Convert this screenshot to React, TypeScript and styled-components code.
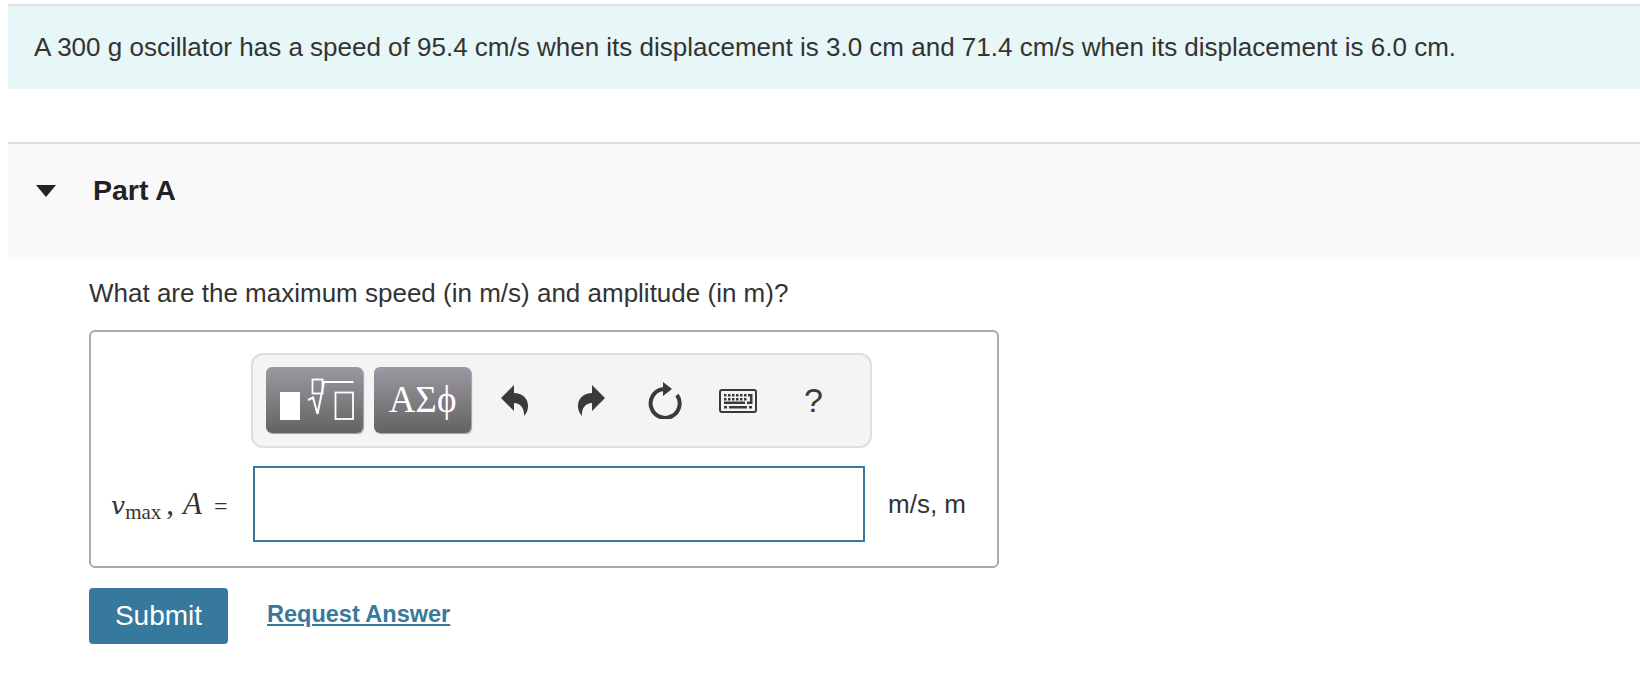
import styled, { createGlobalStyle } from "styled-components";

const GlobalStyle = createGlobalStyle`
  html, body {
    margin: 0;
    padding: 0;
    background: #ffffff;
  }
  body {
    padding-left: 8px;
    font-family: "Liberation Sans", Arial, sans-serif;
    color: #333333;
  }
`;

const KEY_ROWS = [
  [5, 9, 13, 17, 21, 25, 29],
  [5, 9, 13, 17, 21, 25],
];

const UndoIcon = ({ flip }: { flip?: boolean }) => (
  <ToolIcon $flip={flip} width="27" height="31" viewBox="0 0 27 31">
    <path d="M0 13 L13 0 L13 8 C22 8 27.5 14 27 22 C26.8 26 25 29 23 31 C23.6 24 20 18 13 18 L13 26 Z" fill="#3a3a3a" />
  </ToolIcon>
);

const ResetIcon = () => (
  <svg width="34" height="37" viewBox="0 0 34 37">
    <path d="M29 13 A14.5 14.5 0 1 1 15 7" fill="none" stroke="#3a3a3a" strokeWidth="4" />
    <path d="M15 0 L24 7 L15 14 Z" fill="#3a3a3a" />
  </svg>
);

const KeyboardIcon = () => (
  <svg width="38" height="24" viewBox="0 0 38 24">
    <rect x="1" y="1" width="36" height="22" rx="2" fill="#f4f4f4" stroke="#3a3a3a" strokeWidth="2" />
    {KEY_ROWS.map((row, r) =>
      row.map((x) => <rect key={`${r}-${x}`} x={x} y={5 + r * 4} width="2.5" height="2.5" fill="#3a3a3a" />)
    )}
    <rect x="31" y="5" width="2.5" height="10" fill="#3a3a3a" />
    <rect x="5" y="12.5" width="21" height="2.5" fill="#3a3a3a" />
    <rect x="28" y="12.5" width="5" height="2.5" fill="#3a3a3a" />
    <rect x="5" y="17" width="3" height="2.5" fill="#3a3a3a" />
    <rect x="10" y="17" width="18" height="2.5" fill="#3a3a3a" />
    <rect x="30" y="17" width="3" height="2.5" fill="#3a3a3a" />
  </svg>
);

const TemplatesGlyph = () => (
  <svg width="97" height="66" viewBox="0 0 97 66">
    <rect x="14" y="25" width="20" height="28" fill="#ffffff" />
    <rect x="46.5" y="12.5" width="10" height="14" fill="none" stroke="#ffffff" strokeWidth="1.8" />
    <path d="M42 33 L47 30.5 L51.5 47 L58 15 L87.5 15" fill="none" stroke="#ffffff" strokeWidth="2" />
    <rect x="69.5" y="25.5" width="17.5" height="26.5" fill="none" stroke="#ffffff" strokeWidth="1.8" />
  </svg>
);

export default function App() {
  return (
    <Page>
      <GlobalStyle />
      <Banner>A 300 g oscillator has a speed of 95.4 cm/s when its displacement is 3.0 cm and 71.4 cm/s when its displacement is 6.0 cm.</Banner>

      <PartHeader>
        <Caret />
        <PartTitle>Part A</PartTitle>
      </PartHeader>

      <PartBody>
        <Question>What are the maximum speed (in m/s) and amplitude (in m)?</Question>

        <AnswerBox>
          <Toolbar>
            <MathButton>
              <TemplatesGlyph />
            </MathButton>
            <MathButton $gap>ΑΣϕ</MathButton>
            <IconSlot $left={30} $width={27}>
              <UndoIcon />
            </IconSlot>
            <IconSlot $left={50} $width={27}>
              <UndoIcon flip />
            </IconSlot>
            <IconSlot $left={43} $width={34}>
              <ResetIcon />
            </IconSlot>
            <IconSlot $left={37} $width={38}>
              <KeyboardIcon />
            </IconSlot>
            <HelpMark>?</HelpMark>
          </Toolbar>

          <AnswerRow>
            <MathLabel>
              <MathV>v</MathV>
              <sub>max</sub>
              <Comma>,</Comma>
              <MathItalic>A</MathItalic>
              <Equals>=</Equals>
            </MathLabel>
            <AnswerInput type="text" />
            <Units>m/s, m</Units>
          </AnswerRow>
        </AnswerBox>

        <Actions>
          <SubmitButton>Submit</SubmitButton>
          <RequestLink href="#">Request Answer</RequestLink>
        </Actions>
      </PartBody>
    </Page>
  );
}

const Page = styled.div`
  padding-top: 4px;
  height: 676px;
  overflow: hidden;
`;

const Banner = styled.div`
  box-sizing: border-box;
  height: 85px;
  border-top: 2px solid #e0e0e0;
  background: #e7f6f6;
  padding-left: 26px;
  display: flex;
  align-items: center;
  font-size: 26px;
  padding-bottom: 1px;
`;

const PartHeader = styled.div`
  box-sizing: border-box;
  height: 115px;
  margin-top: 53px;
  border-top: 2px solid #e0e0e0;
  background: #f9f9f9;
  display: flex;
  align-items: center;
  padding-left: 28px;
  padding-bottom: 20px;
`;

const Caret = styled.span`
  width: 0;
  height: 0;
  border-left: 10.5px solid transparent;
  border-right: 10.5px solid transparent;
  border-top: 12px solid #222222;
`;

const PartTitle = styled.h2`
  margin: 0 0 0 37px;
  font-size: 28.5px;
  font-weight: 700;
  color: #222222;
`;

const PartBody = styled.div`
  padding-left: 81px;
`;

const Question = styled.p`
  margin: 0;
  padding-top: 22px;
  height: 51px;
  line-height: 28px;
  font-size: 26px;
`;

const AnswerBox = styled.div`
  box-sizing: border-box;
  width: 910px;
  height: 238px;
  border: 2px solid #aaaaaa;
  border-radius: 6px;
  padding-top: 21px;
`;

const Toolbar = styled.div`
  box-sizing: border-box;
  width: 621px;
  height: 95px;
  margin-left: 160px;
  border: 2px solid #dedede;
  border-radius: 12px;
  background: #f4f4f4;
  display: flex;
  align-items: center;
  padding-left: 13px;
`;

const MathButton = styled.div<{ $gap?: boolean }>`
  width: 97px;
  height: 66px;
  margin-left: ${(p) => (p.$gap ? 11 : 0)}px;
  margin-bottom: 2px;
  border-radius: 6px;
  background: linear-gradient(#9b99a1, #636363);
  box-shadow: 1px 1px 1px rgba(0, 0, 0, 0.35);
  color: #ffffff;
  display: flex;
  align-items: center;
  justify-content: center;
  font-family: "Liberation Serif", serif;
  font-size: 37px;
`;

const ToolIcon = styled.svg<{ $flip?: boolean }>`
  transform: ${(p) => (p.$flip ? "scaleX(-1)" : "none")};
`;

const IconSlot = styled.div<{ $left: number; $width: number }>`
  flex: none;
  width: ${(p) => p.$width}px;
  margin-left: ${(p) => p.$left}px;
  display: flex;
  align-items: center;
  justify-content: center;
`;

const HelpMark = styled.span`
  margin-left: 47px;
  font-size: 34px;
  color: #3a3a3a;
`;

const AnswerRow = styled.div`
  display: flex;
  align-items: center;
  margin-top: 18px;
`;

const MathLabel = styled.div`
  box-sizing: border-box;
  width: 162px;
  padding-left: 20px;
  display: flex;
  align-items: baseline;
  font-family: "Liberation Serif", serif;
  font-size: 31px;
  color: #333333;

  sub {
    font-size: 21px;
    vertical-align: baseline;
    position: relative;
    top: 5px;
  }
`;

const MathItalic = styled.i`
  font-style: italic;
`;

const MathV = styled.i`
  font-family: "DejaVu Serif", serif;
  font-size: 25px;
  font-style: italic;
`;

const Comma = styled.span`
  margin: 0 9px 0 5px;
`;

const Equals = styled.span`
  margin-left: 12px;
  font-size: 24px;
`;

const AnswerInput = styled.input`
  box-sizing: border-box;
  width: 612px;
  height: 76px;
  border: 2px solid #37799c;
  background: #ffffff;
  padding: 0;
  outline: none;
`;

const Units = styled.span`
  margin-left: 23px;
  font-size: 26px;
`;

const Actions = styled.div`
  display: flex;
  align-items: center;
  margin-top: 20px;
`;

const SubmitButton = styled.button`
  box-sizing: border-box;
  width: 139px;
  height: 56px;
  border: 0;
  border-radius: 4px;
  background: #37799c;
  color: #ffffff;
  font-family: "Liberation Sans", Arial, sans-serif;
  font-size: 28px;
`;

const RequestLink = styled.a`
  margin-left: 39px;
  margin-bottom: 4px;
  font-size: 23.5px;
  font-weight: 700;
  color: #37799c;
  text-decoration: underline;
`;
